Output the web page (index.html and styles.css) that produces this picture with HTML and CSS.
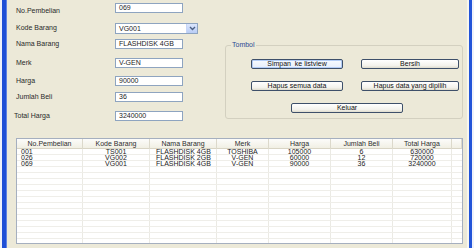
FILE: index.html
```html
<!DOCTYPE html>
<html>
<head>
<meta charset="utf-8">
<link rel="stylesheet" href="styles.css">
</head>
<body>
<div class="screen">
  <div class="window">
    <div class="top">
      <div class="form">
        <div class="lbl">No.Pembelian</div><div class="tb">069</div>
        <div class="lbl">Kode Barang</div>
        <div class="combo"><span class="cv">VG001</span><span class="drop"><svg width="7" height="5" viewBox="0 0 7 5"><path d="M1 1 L3.5 3.5 L6 1" fill="none" stroke="#4d6185" stroke-width="1.4"/></svg></span></div>
        <div class="lbl">Nama Barang</div><div class="tb">FLASHDISK 4GB</div>
        <div class="lbl">Merk</div><div class="tb">V-GEN</div>
        <div class="lbl">Harga</div><div class="tb">90000</div>
        <div class="lbl">Jumlah Beli</div><div class="tb">36</div>
        <div class="lbl lbl-total">Total Harga</div><div class="tb">3240000</div>
      </div>
      <fieldset class="group">
        <legend>Tombol</legend>
        <div class="btns">
          <div class="btn focus">Simpan&nbsp; ke listview</div>
          <div class="btn">Bersih</div>
          <div class="btn">Hapus semua data</div>
          <div class="btn">Hapus data yang dipilih</div>
          <div class="btn keluar">Keluar</div>
        </div>
      </fieldset>
    </div>
    <div class="listview">
      <div class="row head">
        <div class="c">No.Pembelian</div><div class="c">Kode Barang</div><div class="c">Nama Barang</div><div class="c">Merk</div><div class="c">Harga</div><div class="c">Jumlah Beli</div><div class="c">Total Harga</div><div class="c"></div>
      </div>
      <div class="row">
        <div class="l">001</div><div class="c">TS001</div><div class="l2">FLASHDISK 4GB</div><div class="c">TOSHIBA</div><div class="c">105000</div><div class="c">6</div><div class="c">630000</div><div></div>
      </div>
      <div class="row">
        <div class="l">026</div><div class="c">VG002</div><div class="l2">FLASHDISK 2GB</div><div class="c">V-GEN</div><div class="c">60000</div><div class="c">12</div><div class="c">720000</div><div></div>
      </div>
      <div class="row">
        <div class="l">069</div><div class="c">VG001</div><div class="l2">FLASHDISK 4GB</div><div class="c">V-GEN</div><div class="c">90000</div><div class="c">36</div><div class="c">3240000</div><div></div>
      </div>
      <div class="row"><div></div><div></div><div></div><div></div><div></div><div></div><div></div><div></div></div>
      <div class="row"><div></div><div></div><div></div><div></div><div></div><div></div><div></div><div></div></div>
      <div class="row"><div></div><div></div><div></div><div></div><div></div><div></div><div></div><div></div></div>
      <div class="row"><div></div><div></div><div></div><div></div><div></div><div></div><div></div><div></div></div>
      <div class="row"><div></div><div></div><div></div><div></div><div></div><div></div><div></div><div></div></div>
      <div class="row"><div></div><div></div><div></div><div></div><div></div><div></div><div></div><div></div></div>
      <div class="row"><div></div><div></div><div></div><div></div><div></div><div></div><div></div><div></div></div>
      <div class="row"><div></div><div></div><div></div><div></div><div></div><div></div><div></div><div></div></div>
      <div class="row"><div></div><div></div><div></div><div></div><div></div><div></div><div></div><div></div></div>
      <div class="row"><div></div><div></div><div></div><div></div><div></div><div></div><div></div><div></div></div>
      <div class="row"><div></div><div></div><div></div><div></div><div></div><div></div><div></div><div></div></div>
      <div class="row"><div></div><div></div><div></div><div></div><div></div><div></div><div></div><div></div></div>
      <div class="row"><div></div><div></div><div></div><div></div><div></div><div></div><div></div><div></div></div>
    </div>
  </div>
</div>
</body>
</html>
```
FILE: styles.css
```css
* { box-sizing: border-box; }
html, body { margin: 0; padding: 0; background: #f2f4fa; }
body {
  font-family: "Liberation Sans", Arial, sans-serif;
  font-size: 7px;
  color: #222;
}
.screen {
  width: 474px;
  height: 248px;
  padding: 0 2px;
  background: #eef1fa;
  overflow: hidden;
}
.window {
  height: 248px;
  background: #ece9d8;
  border-left: 4px solid #1f4fd6;
  border-right: 3px solid #2254d8;
  box-shadow: inset 1px 0 0 #5f82e2, inset -2px 0 0 #f7f6ef;
  padding: 0 6px 0 10px;
}
.top {
  height: 138px;
  display: flex;
  align-items: flex-start;
}
.form {
  width: 209px;
  flex: none;
  margin-top: 3px;
  display: grid;
  grid-template-columns: 99px 110px;
  grid-template-rows: 20px 16px 19px 18px 16px 19px 11px;
  align-items: start;
}
.lbl {
  height: 10px;
  line-height: 10px;
  color: #2a2a2a;
  white-space: nowrap;
}
.form .lbl:first-child { margin-top: 3px; }
.lbl-total { margin-left: -2px; }
.tb {
  width: 68px;
  height: 10px;
  background: #fff;
  border: 1px solid #8ea4c0;
  line-height: 8px;
  padding-left: 3px;
  color: #1d1d1d;
  white-space: nowrap;
}
.combo {
  width: 83px;
  height: 11px;
  background: #fff;
  border: 1px solid #8ea4c0;
  display: flex;
  align-items: stretch;
}
.cv {
  flex: 1;
  line-height: 9px;
  padding-left: 3px;
}
.drop {
  width: 11px;
  margin: 0 0 0 0;
  background: linear-gradient(#dbe6fd, #b9cdf6);
  border-left: 1px solid #c6d6f8;
  display: flex;
  align-items: center;
  justify-content: center;
}
.group {
  flex: 1;
  margin: 41px 0 0 0;
  padding: 0;
  height: 78px;
  border: 1px solid #d3d0c0;
  border-radius: 3px;
  min-width: 0;
}
.group legend {
  margin-left: 5px;
  padding: 0 1px;
  font-size: 7px;
  line-height: 8px;
  color: #2b4a93;
}
.btns {
  padding: 10px 0 0 25px;
  display: grid;
  grid-template-columns: 92px 98px;
  column-gap: 18px;
  row-gap: 12px;
}
.btn {
  height: 10px;
  border: 1px solid #3e506a;
  border-radius: 2px;
  background: linear-gradient(#ffffff, #f3f2ec 70%, #dedbcd);
  text-align: center;
  line-height: 8px;
  color: #111;
  white-space: nowrap;
}
.btn.focus {
  box-shadow: inset 0 0 0 1px #b3cdf6;
  background: linear-gradient(#f7fbff, #e6eefb);
}
.btn.keluar {
  grid-column: 1 / -1;
  justify-self: start;
  width: 112px;
  margin-left: 40px;
}
.listview {
  height: 106px;
  background: #fff;
  border: 1px solid #a5afbf;
  overflow: hidden;
}
.row {
  display: grid;
  grid-template-columns: 66px 67px 67px 52px 62px 62px 59px 1fr;
  height: 6px;
  line-height: 6px;
  border-bottom: 1px solid #efeee9;
}
.row > div {
  border-right: 1px solid #ebeae4;
  white-space: nowrap;
  overflow: visible;
}
.row > div:last-child { border-right: none; }
.row.head {
  height: 10px;
  line-height: 10px;
  background: linear-gradient(#fcfcfa, #f1efe4);
  border-bottom: 1px solid #d8d4c4;
  color: #2e2e2e;
}
.row.head > div {
  border-right: 1px solid #dcd9cb;
}
.c { text-align: center; }
.l { padding-left: 4px; }
.l2 { padding-left: 6px; }
```
